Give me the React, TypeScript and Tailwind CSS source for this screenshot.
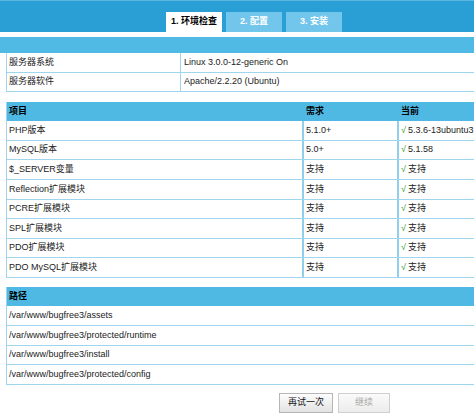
const font = "font-['Liberation_Sans','Noto_Sans_CJK_SC',sans-serif]";

const checks = [
  { name: 'PHP版本', need: '5.1.0+', cur: '5.3.6-13ubuntu3.6' },
  { name: 'MySQL版本', need: '5.0+', cur: '5.1.58' },
  { name: '$_SERVER变量', need: '支持', cur: '支持' },
  { name: 'Reflection扩展模块', need: '支持', cur: '支持' },
  { name: 'PCRE扩展模块', need: '支持', cur: '支持' },
  { name: 'SPL扩展模块', need: '支持', cur: '支持' },
  { name: 'PDO扩展模块', need: '支持', cur: '支持' },
  { name: 'PDO MySQL扩展模块', need: '支持', cur: '支持' },
];

const paths = [
  '/var/www/bugfree3/assets',
  '/var/www/bugfree3/protected/runtime',
  '/var/www/bugfree3/install',
  '/var/www/bugfree3/protected/config',
];

const row = 'flex h-[19.6px] items-center border-b border-[#9fd5ee] bg-white';
const cell = 'h-full flex items-center pl-[2px] whitespace-nowrap overflow-hidden';

export default function App() {
  return (
    <div className={`w-[474px] h-[414px] overflow-hidden bg-white text-[9px] text-[#222] ${font}`}>
      {/* Header with step tabs */}
      <div className="h-[32px] bg-[#2a9fd5] border-t border-[#5cb7e0] flex items-end">
        <div className="ml-[166px] flex gap-[4px]">
          <div className="w-[56px] h-[20px] bg-white flex items-center justify-center font-bold text-black">1. 环境检查</div>
          <div className="w-[56px] h-[20px] bg-[#72c6ec] flex items-center justify-center font-bold text-white">2. 配置</div>
          <div className="w-[56px] h-[20px] bg-[#72c6ec] flex items-center justify-center font-bold text-white">3. 安装</div>
        </div>
      </div>

      <div className="mt-[5px] h-[16px] bg-[#50b9e4]" />

      {/* Server info */}
      <div className="ml-[6px] w-[500px] border-l border-[#9fd5ee]">
        <div className={row}>
          <div className={`${cell} w-[174px] border-r border-[#9fd5ee]`}>服务器系统</div>
          <div className={`${cell} pl-[3px]`}>Linux 3.0.0-12-generic On</div>
        </div>
        <div className={row}>
          <div className={`${cell} w-[174px] border-r border-[#9fd5ee]`}>服务器软件</div>
          <div className={`${cell} pl-[3px]`}>Apache/2.2.20 (Ubuntu)</div>
        </div>
      </div>

      {/* Environment checks */}
      <div className="mt-[10px] ml-[6px] w-[500px] border-l border-[#9fd5ee]">
        <div className="flex h-[19px] items-center bg-[#4fb8e3] font-bold text-black">
          <div className={`${cell} w-[297px]`}>项目</div>
          <div className={`${cell} w-[95px]`}>需求</div>
          <div className={cell}>当前</div>
        </div>
        {checks.map((c) => (
          <div key={c.name} className={row}>
            <div className={`${cell} w-[297px] border-r-2 border-[#8fcfeb]`}>{c.name}</div>
            <div className={`${cell} w-[95px] border-r-2 border-[#8fcfeb]`}>{c.need}</div>
            <div className={cell}>
              <span className="text-[#2e9e2e] mr-[2px]">√</span>
              {c.cur}
            </div>
          </div>
        ))}
      </div>

      {/* Writable paths */}
      <div className="mt-[9px] ml-[6px] w-[500px] border-l border-[#9fd5ee]">
        <div className="flex h-[19.5px] items-center bg-[#4fb8e3] font-bold text-black">
          <div className={cell}>路径</div>
        </div>
        {paths.map((p) => (
          <div key={p} className={row}>
            <div className={cell}>{p}</div>
          </div>
        ))}
      </div>

      {/* Actions */}
      <div className="mt-[8px] ml-[279px] flex gap-[5px]">
        <button className="w-[54px] h-[20px] border border-[#b5b5b5] bg-gradient-to-b from-[#fdfdfd] to-[#e2e2e2] text-[9px] text-[#111]">
          再试一次
        </button>
        <button className="w-[52px] h-[20px] border border-[#cfcfcf] bg-gradient-to-b from-[#fafafa] to-[#ececec] text-[9px] text-[#a8a8a8]">
          继续
        </button>
      </div>
    </div>
  );
}
